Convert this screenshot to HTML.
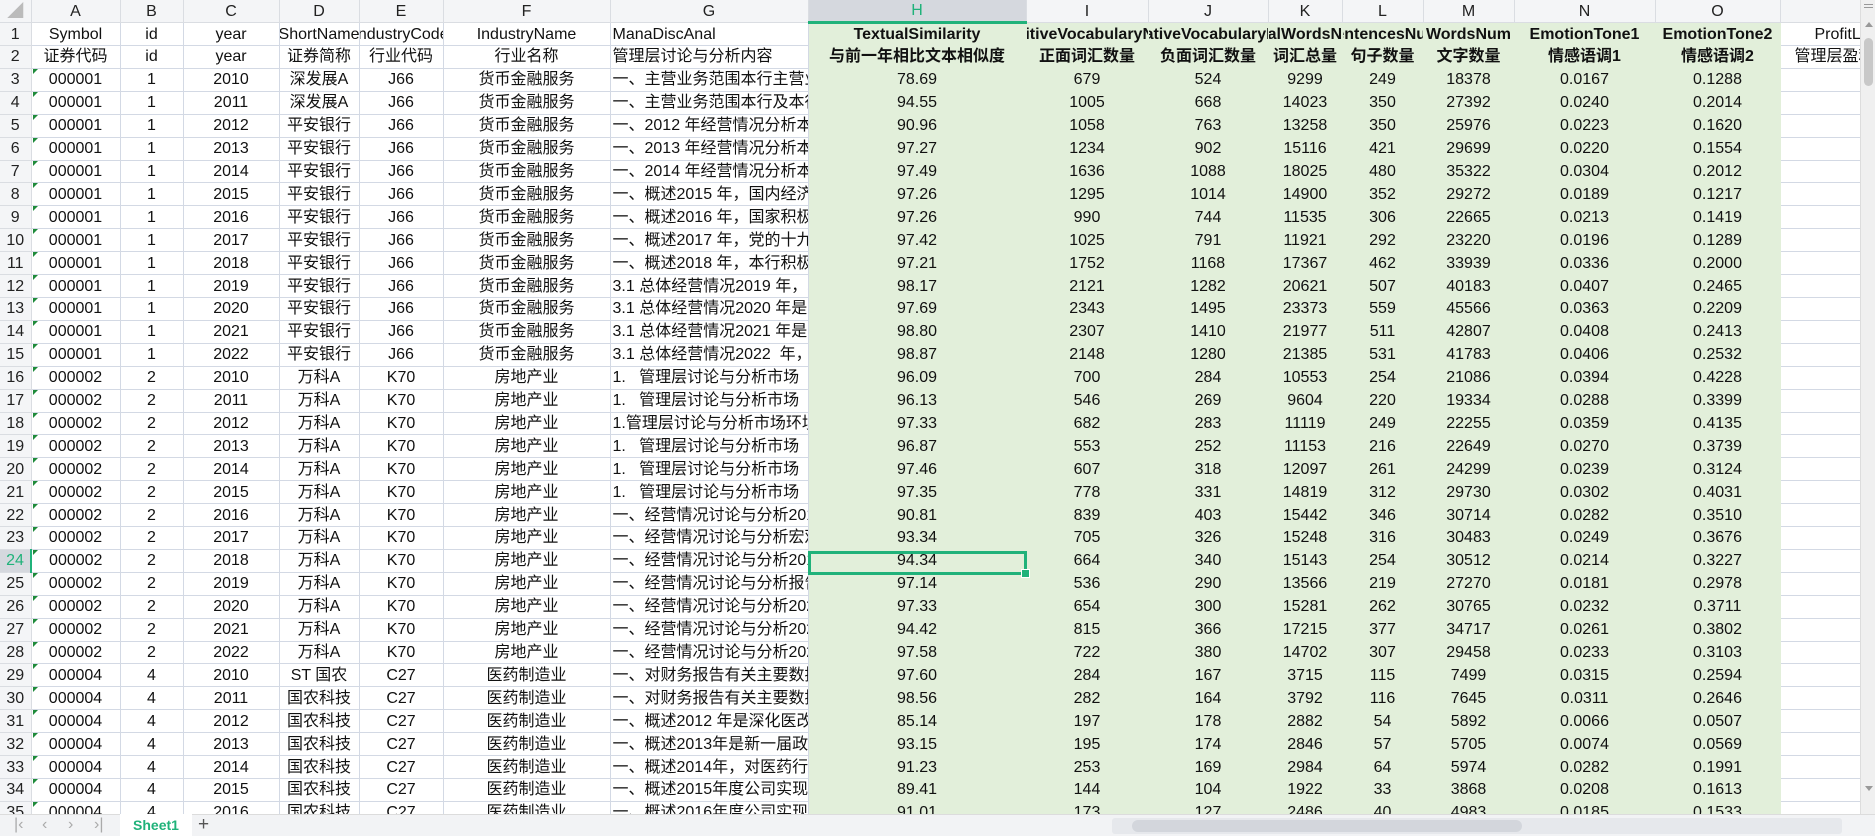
<!DOCTYPE html>
<html><head><meta charset="utf-8"><style>
*{margin:0;padding:0;box-sizing:border-box}
body{width:1875px;height:836px;overflow:hidden;background:#fff;font-family:"Liberation Sans","Noto Sans CJK SC",sans-serif;font-size:16px;color:#111;position:relative}
table{border-collapse:collapse;table-layout:fixed;position:absolute;left:0;top:0;width:1860px}
td{height:22.92px;border-right:1px solid #d3d9e4;border-bottom:1px solid #d3d9e4;white-space:nowrap;overflow:hidden;text-align:center;padding:0 2px;line-height:21px}
tr.h td{height:22.5px;background:#f4f5f7;color:#222;font-size:16px;border-color:#dadde2}
td.rn{background:#f4f5f7;color:#222;border-color:#dadde2}
td.g{background:#e2efda;border-color:#e2efda}
td.l{text-align:left}
td.b{font-weight:bold}
.c{display:flex;justify-content:center;white-space:nowrap}
td.a{position:relative}
td.a:before{content:"";position:absolute;left:1px;top:0;border-top:5px solid #1e8a3a;border-right:5px solid transparent}
tr.h td.sel{background:#d5d8de;color:#20b27a;border-bottom:3px solid #20b27a}
td.rsel{background:#d5d8de!important;color:#20b27a!important;border-right:2px solid #20b27a!important}
#cur{position:absolute;left:808px;top:551px;width:219px;height:24px;border:3px solid #20b27a}
#cur:after{content:"";position:absolute;right:-6px;bottom:-6px;width:7px;height:7px;background:#20b27a;border:1px solid #fff}
#vs{position:absolute;left:1860px;top:0;width:15px;height:814px;background:#f0f0f0;border-left:1px solid #ddd}
#vs .t{position:absolute;left:3px;top:38px;width:9px;height:48px;border-radius:5px;background:#c8c8c8}
#bar{position:absolute;left:0;top:814px;width:1875px;height:22px;background:#f2f3f5;border-top:1px solid #dcdcdc}
#tab{position:absolute;left:120px;top:-1px;width:72px;height:23px;background:#fff;color:#20b27a;font-weight:bold;font-size:14px;text-align:center;line-height:22px}
.nav{position:absolute;top:1px;color:#aaa;font-size:16px}
#hs{position:absolute;left:1112px;top:3px;width:730px;height:16px;background:#e6e8ec;border-radius:3px}
#hs .t{position:absolute;left:20px;top:2px;width:390px;height:12px;background:#d3d6dc;border-radius:6px}
</style></head><body>
<table>
<colgroup><col style="width:31px"><col style="width:89px"><col style="width:63px"><col style="width:96px"><col style="width:80px"><col style="width:84px"><col style="width:167px"><col style="width:198px"><col style="width:218px"><col style="width:122px"><col style="width:120px"><col style="width:74px"><col style="width:81px"><col style="width:91px"><col style="width:141px"><col style="width:125px"><col style="width:80px"></colgroup>
<tr class="h"><td style="color:#bbb">◢</td><td>A</td><td>B</td><td>C</td><td>D</td><td>E</td><td>F</td><td>G</td><td class="sel">H</td><td>I</td><td>J</td><td>K</td><td>L</td><td>M</td><td>N</td><td>O</td><td></td></tr>
<tr><td class="rn">1</td><td>Symbol</td><td>id</td><td>year</td><td><div class="c">ShortName</div></td><td><div class="c">IndustryCode</div></td><td>IndustryName</td><td class="l">ManaDiscAnal</td><td class="g b">TextualSimilarity</td><td class="g b"><div class="c">PositiveVocabularyNum</div></td><td class="g b"><div class="c">NegativeVocabularyNum</div></td><td class="g b"><div class="c">TotalWordsNum</div></td><td class="g b"><div class="c">SentencesNum</div></td><td class="g b"><div class="c">WordsNum</div></td><td class="g b">EmotionTone1</td><td class="g b">EmotionTone2</td><td style="padding-left:34px;text-align:left">ProfitLevel</td></tr>
<tr><td class="rn">2</td><td>证券代码</td><td>id</td><td>year</td><td>证券简称</td><td>行业代码</td><td>行业名称</td><td class="l">管理层讨论与分析内容</td><td class="g b">与前一年相比文本相似度</td><td class="g b">正面词汇数量</td><td class="g b">负面词汇数量</td><td class="g b">词汇总量</td><td class="g b">句子数量</td><td class="g b">文字数量</td><td class="g b">情感语调1</td><td class="g b">情感语调2</td><td style="padding-left:14px;text-align:left">管理层盈利能力</td></tr>
<tr><td class="rn">3</td><td class="a">000001</td><td>1</td><td>2010</td><td>深发展A</td><td>J66</td><td>货币金融服务</td><td class="l">一、主营业务范围本行主营业务</td><td class="g">78.69</td><td class="g">679</td><td class="g">524</td><td class="g">9299</td><td class="g">249</td><td class="g">18378</td><td class="g">0.0167</td><td class="g">0.1288</td><td></td></tr>
<tr><td class="rn">4</td><td class="a">000001</td><td>1</td><td>2011</td><td>深发展A</td><td>J66</td><td>货币金融服务</td><td class="l">一、主营业务范围本行及本行</td><td class="g">94.55</td><td class="g">1005</td><td class="g">668</td><td class="g">14023</td><td class="g">350</td><td class="g">27392</td><td class="g">0.0240</td><td class="g">0.2014</td><td></td></tr>
<tr><td class="rn">5</td><td class="a">000001</td><td>1</td><td>2012</td><td>平安银行</td><td>J66</td><td>货币金融服务</td><td class="l">一、2012 年经营情况分析本行</td><td class="g">90.96</td><td class="g">1058</td><td class="g">763</td><td class="g">13258</td><td class="g">350</td><td class="g">25976</td><td class="g">0.0223</td><td class="g">0.1620</td><td></td></tr>
<tr><td class="rn">6</td><td class="a">000001</td><td>1</td><td>2013</td><td>平安银行</td><td>J66</td><td>货币金融服务</td><td class="l">一、2013 年经营情况分析本行</td><td class="g">97.27</td><td class="g">1234</td><td class="g">902</td><td class="g">15116</td><td class="g">421</td><td class="g">29699</td><td class="g">0.0220</td><td class="g">0.1554</td><td></td></tr>
<tr><td class="rn">7</td><td class="a">000001</td><td>1</td><td>2014</td><td>平安银行</td><td>J66</td><td>货币金融服务</td><td class="l">一、2014 年经营情况分析本行</td><td class="g">97.49</td><td class="g">1636</td><td class="g">1088</td><td class="g">18025</td><td class="g">480</td><td class="g">35322</td><td class="g">0.0304</td><td class="g">0.2012</td><td></td></tr>
<tr><td class="rn">8</td><td class="a">000001</td><td>1</td><td>2015</td><td>平安银行</td><td>J66</td><td>货币金融服务</td><td class="l">一、概述2015 年，国内经济</td><td class="g">97.26</td><td class="g">1295</td><td class="g">1014</td><td class="g">14900</td><td class="g">352</td><td class="g">29272</td><td class="g">0.0189</td><td class="g">0.1217</td><td></td></tr>
<tr><td class="rn">9</td><td class="a">000001</td><td>1</td><td>2016</td><td>平安银行</td><td>J66</td><td>货币金融服务</td><td class="l">一、概述2016 年，国家积极</td><td class="g">97.26</td><td class="g">990</td><td class="g">744</td><td class="g">11535</td><td class="g">306</td><td class="g">22665</td><td class="g">0.0213</td><td class="g">0.1419</td><td></td></tr>
<tr><td class="rn">10</td><td class="a">000001</td><td>1</td><td>2017</td><td>平安银行</td><td>J66</td><td>货币金融服务</td><td class="l">一、概述2017 年，党的十九大</td><td class="g">97.42</td><td class="g">1025</td><td class="g">791</td><td class="g">11921</td><td class="g">292</td><td class="g">23220</td><td class="g">0.0196</td><td class="g">0.1289</td><td></td></tr>
<tr><td class="rn">11</td><td class="a">000001</td><td>1</td><td>2018</td><td>平安银行</td><td>J66</td><td>货币金融服务</td><td class="l">一、概述2018 年，本行积极</td><td class="g">97.21</td><td class="g">1752</td><td class="g">1168</td><td class="g">17367</td><td class="g">462</td><td class="g">33939</td><td class="g">0.0336</td><td class="g">0.2000</td><td></td></tr>
<tr><td class="rn">12</td><td class="a">000001</td><td>1</td><td>2019</td><td>平安银行</td><td>J66</td><td>货币金融服务</td><td class="l">3.1 总体经营情况2019 年，本</td><td class="g">98.17</td><td class="g">2121</td><td class="g">1282</td><td class="g">20621</td><td class="g">507</td><td class="g">40183</td><td class="g">0.0407</td><td class="g">0.2465</td><td></td></tr>
<tr><td class="rn">13</td><td class="a">000001</td><td>1</td><td>2020</td><td>平安银行</td><td>J66</td><td>货币金融服务</td><td class="l">3.1 总体经营情况2020 年是</td><td class="g">97.69</td><td class="g">2343</td><td class="g">1495</td><td class="g">23373</td><td class="g">559</td><td class="g">45566</td><td class="g">0.0363</td><td class="g">0.2209</td><td></td></tr>
<tr><td class="rn">14</td><td class="a">000001</td><td>1</td><td>2021</td><td>平安银行</td><td>J66</td><td>货币金融服务</td><td class="l">3.1 总体经营情况2021 年是</td><td class="g">98.80</td><td class="g">2307</td><td class="g">1410</td><td class="g">21977</td><td class="g">511</td><td class="g">42807</td><td class="g">0.0408</td><td class="g">0.2413</td><td></td></tr>
<tr><td class="rn">15</td><td class="a">000001</td><td>1</td><td>2022</td><td>平安银行</td><td>J66</td><td>货币金融服务</td><td class="l">3.1 总体经营情况2022&nbsp; 年，</td><td class="g">98.87</td><td class="g">2148</td><td class="g">1280</td><td class="g">21385</td><td class="g">531</td><td class="g">41783</td><td class="g">0.0406</td><td class="g">0.2532</td><td></td></tr>
<tr><td class="rn">16</td><td class="a">000002</td><td>2</td><td>2010</td><td>万科A</td><td>K70</td><td>房地产业</td><td class="l">1.&nbsp;&nbsp; 管理层讨论与分析市场</td><td class="g">96.09</td><td class="g">700</td><td class="g">284</td><td class="g">10553</td><td class="g">254</td><td class="g">21086</td><td class="g">0.0394</td><td class="g">0.4228</td><td></td></tr>
<tr><td class="rn">17</td><td class="a">000002</td><td>2</td><td>2011</td><td>万科A</td><td>K70</td><td>房地产业</td><td class="l">1.&nbsp;&nbsp; 管理层讨论与分析市场</td><td class="g">96.13</td><td class="g">546</td><td class="g">269</td><td class="g">9604</td><td class="g">220</td><td class="g">19334</td><td class="g">0.0288</td><td class="g">0.3399</td><td></td></tr>
<tr><td class="rn">18</td><td class="a">000002</td><td>2</td><td>2012</td><td>万科A</td><td>K70</td><td>房地产业</td><td class="l">1.管理层讨论与分析市场环境</td><td class="g">97.33</td><td class="g">682</td><td class="g">283</td><td class="g">11119</td><td class="g">249</td><td class="g">22255</td><td class="g">0.0359</td><td class="g">0.4135</td><td></td></tr>
<tr><td class="rn">19</td><td class="a">000002</td><td>2</td><td>2013</td><td>万科A</td><td>K70</td><td>房地产业</td><td class="l">1.&nbsp;&nbsp; 管理层讨论与分析市场</td><td class="g">96.87</td><td class="g">553</td><td class="g">252</td><td class="g">11153</td><td class="g">216</td><td class="g">22649</td><td class="g">0.0270</td><td class="g">0.3739</td><td></td></tr>
<tr><td class="rn">20</td><td class="a">000002</td><td>2</td><td>2014</td><td>万科A</td><td>K70</td><td>房地产业</td><td class="l">1.&nbsp;&nbsp; 管理层讨论与分析市场</td><td class="g">97.46</td><td class="g">607</td><td class="g">318</td><td class="g">12097</td><td class="g">261</td><td class="g">24299</td><td class="g">0.0239</td><td class="g">0.3124</td><td></td></tr>
<tr><td class="rn">21</td><td class="a">000002</td><td>2</td><td>2015</td><td>万科A</td><td>K70</td><td>房地产业</td><td class="l">1.&nbsp;&nbsp; 管理层讨论与分析市场</td><td class="g">97.35</td><td class="g">778</td><td class="g">331</td><td class="g">14819</td><td class="g">312</td><td class="g">29730</td><td class="g">0.0302</td><td class="g">0.4031</td><td></td></tr>
<tr><td class="rn">22</td><td class="a">000002</td><td>2</td><td>2016</td><td>万科A</td><td>K70</td><td>房地产业</td><td class="l">一、经营情况讨论与分析2016</td><td class="g">90.81</td><td class="g">839</td><td class="g">403</td><td class="g">15442</td><td class="g">346</td><td class="g">30714</td><td class="g">0.0282</td><td class="g">0.3510</td><td></td></tr>
<tr><td class="rn">23</td><td class="a">000002</td><td>2</td><td>2017</td><td>万科A</td><td>K70</td><td>房地产业</td><td class="l">一、经营情况讨论与分析宏观</td><td class="g">93.34</td><td class="g">705</td><td class="g">326</td><td class="g">15248</td><td class="g">316</td><td class="g">30483</td><td class="g">0.0249</td><td class="g">0.3676</td><td></td></tr>
<tr><td class="rn rsel">24</td><td class="a">000002</td><td>2</td><td>2018</td><td>万科A</td><td>K70</td><td>房地产业</td><td class="l">一、经营情况讨论与分析2018</td><td class="g">94.34</td><td class="g">664</td><td class="g">340</td><td class="g">15143</td><td class="g">254</td><td class="g">30512</td><td class="g">0.0214</td><td class="g">0.3227</td><td></td></tr>
<tr><td class="rn">25</td><td class="a">000002</td><td>2</td><td>2019</td><td>万科A</td><td>K70</td><td>房地产业</td><td class="l">一、经营情况讨论与分析报告</td><td class="g">97.14</td><td class="g">536</td><td class="g">290</td><td class="g">13566</td><td class="g">219</td><td class="g">27270</td><td class="g">0.0181</td><td class="g">0.2978</td><td></td></tr>
<tr><td class="rn">26</td><td class="a">000002</td><td>2</td><td>2020</td><td>万科A</td><td>K70</td><td>房地产业</td><td class="l">一、经营情况讨论与分析2020</td><td class="g">97.33</td><td class="g">654</td><td class="g">300</td><td class="g">15281</td><td class="g">262</td><td class="g">30765</td><td class="g">0.0232</td><td class="g">0.3711</td><td></td></tr>
<tr><td class="rn">27</td><td class="a">000002</td><td>2</td><td>2021</td><td>万科A</td><td>K70</td><td>房地产业</td><td class="l">一、经营情况讨论与分析2021</td><td class="g">94.42</td><td class="g">815</td><td class="g">366</td><td class="g">17215</td><td class="g">377</td><td class="g">34717</td><td class="g">0.0261</td><td class="g">0.3802</td><td></td></tr>
<tr><td class="rn">28</td><td class="a">000002</td><td>2</td><td>2022</td><td>万科A</td><td>K70</td><td>房地产业</td><td class="l">一、经营情况讨论与分析2022</td><td class="g">97.58</td><td class="g">722</td><td class="g">380</td><td class="g">14702</td><td class="g">307</td><td class="g">29458</td><td class="g">0.0233</td><td class="g">0.3103</td><td></td></tr>
<tr><td class="rn">29</td><td class="a">000004</td><td>4</td><td>2010</td><td>ST 国农</td><td>C27</td><td>医药制造业</td><td class="l">一、对财务报告有关主要数据</td><td class="g">97.60</td><td class="g">284</td><td class="g">167</td><td class="g">3715</td><td class="g">115</td><td class="g">7499</td><td class="g">0.0315</td><td class="g">0.2594</td><td></td></tr>
<tr><td class="rn">30</td><td class="a">000004</td><td>4</td><td>2011</td><td>国农科技</td><td>C27</td><td>医药制造业</td><td class="l">一、对财务报告有关主要数据</td><td class="g">98.56</td><td class="g">282</td><td class="g">164</td><td class="g">3792</td><td class="g">116</td><td class="g">7645</td><td class="g">0.0311</td><td class="g">0.2646</td><td></td></tr>
<tr><td class="rn">31</td><td class="a">000004</td><td>4</td><td>2012</td><td>国农科技</td><td>C27</td><td>医药制造业</td><td class="l">一、概述2012 年是深化医改</td><td class="g">85.14</td><td class="g">197</td><td class="g">178</td><td class="g">2882</td><td class="g">54</td><td class="g">5892</td><td class="g">0.0066</td><td class="g">0.0507</td><td></td></tr>
<tr><td class="rn">32</td><td class="a">000004</td><td>4</td><td>2013</td><td>国农科技</td><td>C27</td><td>医药制造业</td><td class="l">一、概述2013年是新一届政府</td><td class="g">93.15</td><td class="g">195</td><td class="g">174</td><td class="g">2846</td><td class="g">57</td><td class="g">5705</td><td class="g">0.0074</td><td class="g">0.0569</td><td></td></tr>
<tr><td class="rn">33</td><td class="a">000004</td><td>4</td><td>2014</td><td>国农科技</td><td>C27</td><td>医药制造业</td><td class="l">一、概述2014年，对医药行业</td><td class="g">91.23</td><td class="g">253</td><td class="g">169</td><td class="g">2984</td><td class="g">64</td><td class="g">5974</td><td class="g">0.0282</td><td class="g">0.1991</td><td></td></tr>
<tr><td class="rn">34</td><td class="a">000004</td><td>4</td><td>2015</td><td>国农科技</td><td>C27</td><td>医药制造业</td><td class="l">一、概述2015年度公司实现</td><td class="g">89.41</td><td class="g">144</td><td class="g">104</td><td class="g">1922</td><td class="g">33</td><td class="g">3868</td><td class="g">0.0208</td><td class="g">0.1613</td><td></td></tr>
<tr><td class="rn">35</td><td class="a">000004</td><td>4</td><td>2016</td><td>国农科技</td><td>C27</td><td>医药制造业</td><td class="l">一、概述2016年度公司实现</td><td class="g">91.01</td><td class="g">173</td><td class="g">127</td><td class="g">2486</td><td class="g">40</td><td class="g">4983</td><td class="g">0.0185</td><td class="g">0.1533</td><td></td></tr>
</table>
<div id="cur"></div>
<div id="vs"><div style="position:absolute;top:4px;left:3px;width:9px;border-top:1px solid #999;border-bottom:1px solid #999;height:4px"></div><div style="position:absolute;top:22px;left:4px;border-left:4px solid transparent;border-right:4px solid transparent;border-bottom:5px solid #999"></div><div class="t"></div><div style="position:absolute;top:786px;left:4px;border-left:4px solid transparent;border-right:4px solid transparent;border-top:5px solid #999"></div></div>
<div id="bar">
<span class="nav" style="left:14px">|&lsaquo;</span><span class="nav" style="left:42px">&lsaquo;</span><span class="nav" style="left:68px">&rsaquo;</span><span class="nav" style="left:94px">&rsaquo;|</span>
<div id="tab">Sheet1</div>
<span style="position:absolute;left:198px;top:-1px;font-size:19px;color:#555">+</span>
<div id="hs"><div class="t"></div></div>
</div>
</body></html>
